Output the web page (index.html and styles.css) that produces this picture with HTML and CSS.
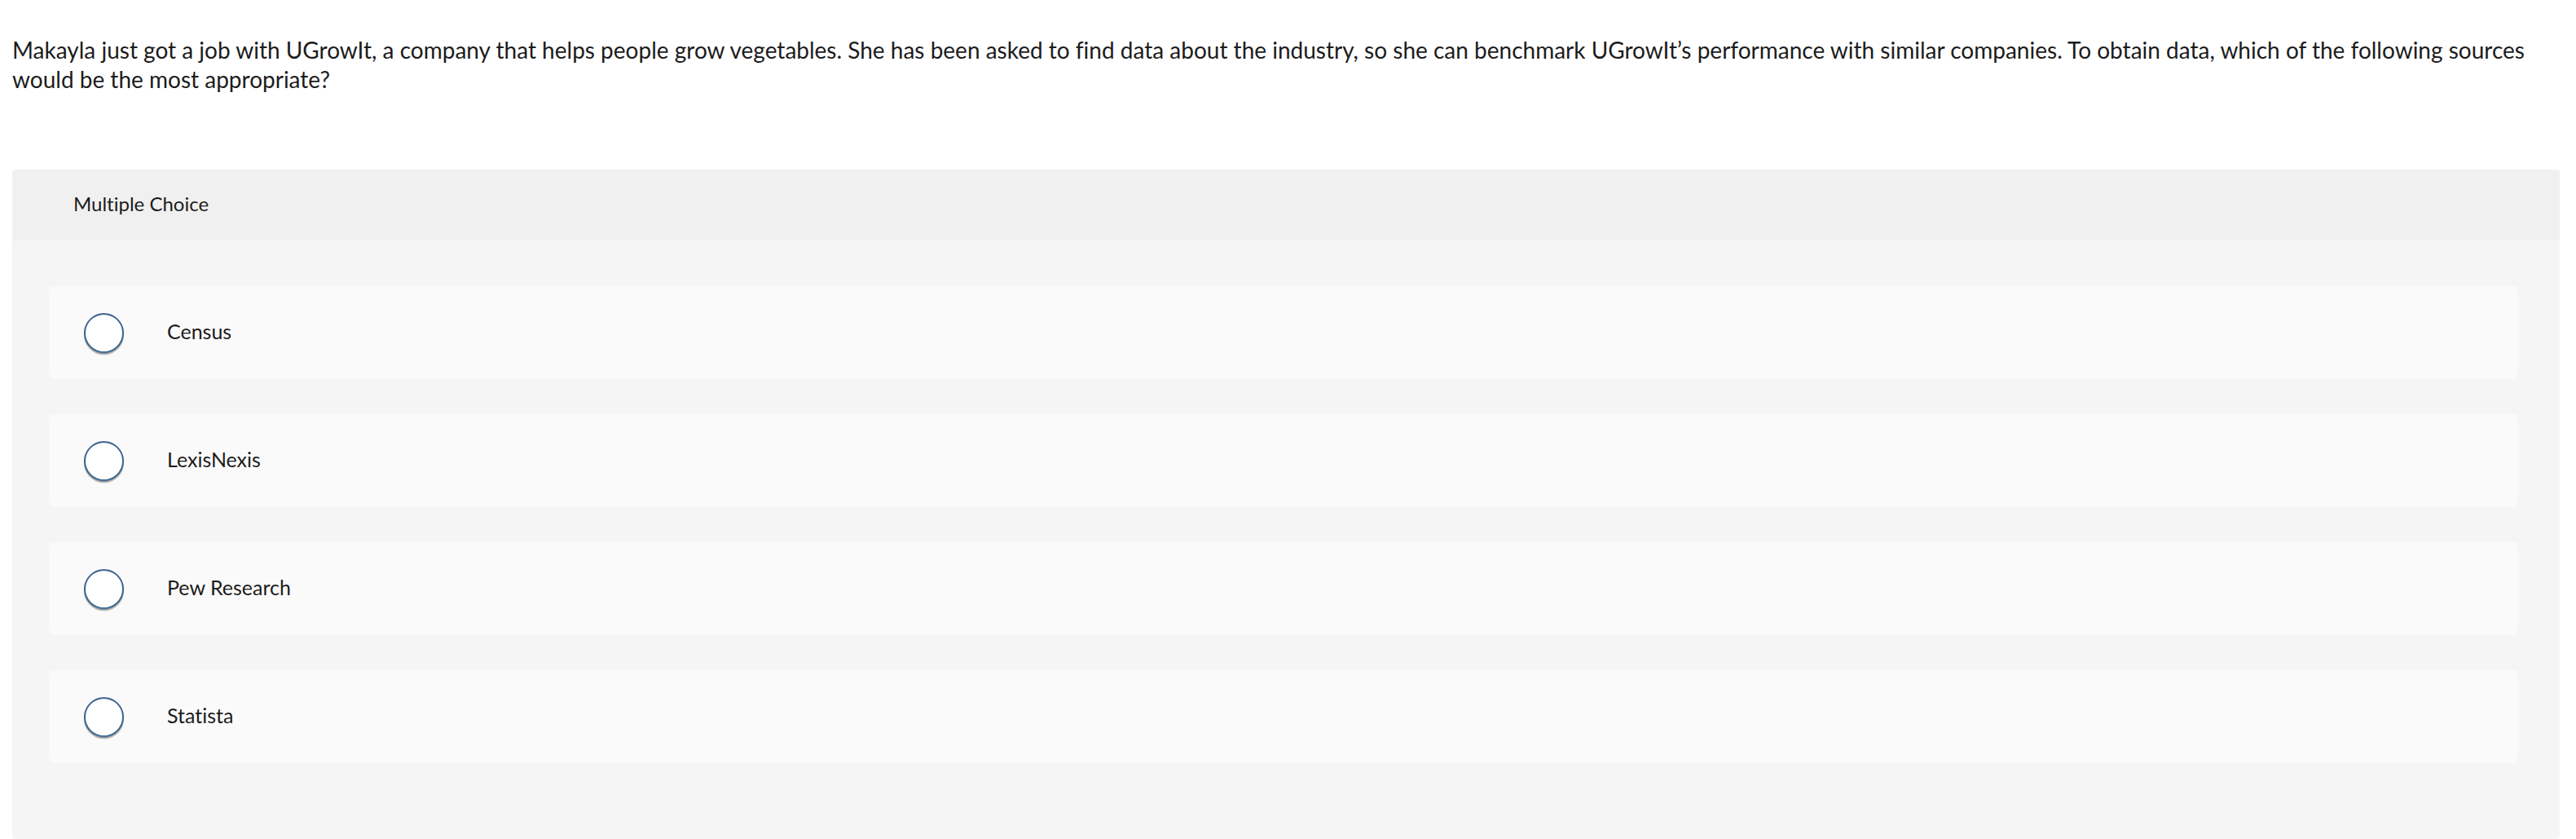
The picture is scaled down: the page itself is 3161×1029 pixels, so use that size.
FILE: index.html
```html
<!DOCTYPE html>
<html lang="en">
<head>
<meta charset="utf-8">
<title>Multiple Choice</title>
<link rel="stylesheet" href="styles.css">
</head>
<body>
<div class="page">
  <p class="question">Makayla just got a job with UGrowIt, a company that helps people grow vegetables. She has been asked to find data about the industry, so she can benchmark UGrowIt’s performance with similar companies. To obtain data, which of the following sources would be the most appropriate?</p>
  <section class="mc">
    <header class="mc-head">Multiple Choice</header>
    <div class="mc-body">
      <label class="opt"><span class="radio"></span><span class="opt-text">Census</span></label>
      <label class="opt"><span class="radio"></span><span class="opt-text">LexisNexis</span></label>
      <label class="opt"><span class="radio"></span><span class="opt-text">Pew Research</span></label>
      <label class="opt"><span class="radio"></span><span class="opt-text">Statista</span></label>
    </div>
  </section>
</div>
</body>
</html>
```
FILE: styles.css
```css
html, body {
  margin: 0;
  background: #ffffff;
}
body {
  font-family: Lato, "Open Sans", sans-serif;
  font-variant-ligatures: none;
  color: #1c1c1c;
}
.page {
  padding: 0 20px 0 15px;
}
.question {
  margin: 43px 0 93px 0;
  font-size: 28px;
  line-height: 36px;
}
.mc {
  background: #f5f5f5;
  border-radius: 4px;
  overflow: hidden;
}
.mc-head {
  height: 87px;
  box-sizing: border-box;
  padding: 0 0 4px 75px;
  background: #f0f0f0;
  display: flex;
  align-items: center;
  font-size: 24px;
}
.mc-body {
  padding: 56px 51px 93px 45px;
  display: flex;
  flex-direction: column;
  gap: 43px;
}
.opt {
  height: 114px;
  background: #fafafa;
  border-radius: 5px;
  display: flex;
  align-items: center;
  padding-left: 43px;
}
.radio {
  width: 45px;
  height: 45px;
  border: 2px solid #3b6791;
  border-radius: 50%;
  background: #ffffff;
  box-shadow: 0 2px 1px rgba(0, 0, 0, 0.35);
  margin-right: 53px;
  flex: none;
}
.opt-text {
  font-size: 25px;
  padding-bottom: 4px;
}
```
